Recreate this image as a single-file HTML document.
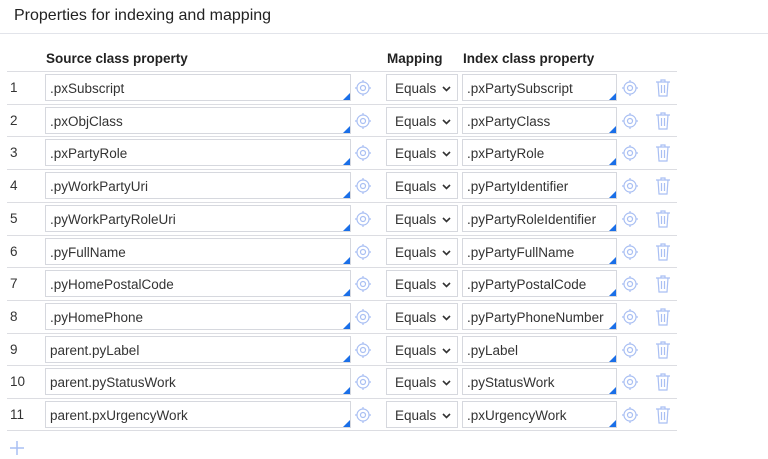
<!DOCTYPE html>
<html><head><style>
body{margin:0;width:768px;height:459px;background:#fff;font-family:"Liberation Sans",sans-serif;color:#333;position:relative;overflow:hidden}
.t{position:absolute;left:14px;top:7px;font-size:16px;color:#222}
.hr{position:absolute;left:0;right:0;top:33px;height:1px;background:#e2e4ea}
.h{position:absolute;top:51px;font-size:13.5px;font-weight:bold;color:#222}
.row{position:absolute;left:7px;width:670px;height:33px;border-top:1px solid #dcdde2}
.n{position:absolute;left:3px;top:8px;font-size:13.5px}
.in{position:absolute;top:2px;height:27px;border:1px solid #d6d8de;box-sizing:border-box;font-size:13.5px;padding:6px 0 0 4px;white-space:nowrap;overflow:hidden}
.in:after{content:"";position:absolute;right:0;bottom:0;border-left:7px solid transparent;border-bottom:7px solid #1a6fe8}
.sel{position:absolute;left:379px;top:2px;width:72px;height:27px;border:1px solid #d6d8de;box-sizing:border-box;font-size:13.5px;padding:6px 0 0 8px}
.sel svg{position:absolute;right:6px;top:11px}
.ic{position:absolute;top:7px}
</style></head><body>
<div class="t">Properties for indexing and mapping</div>
<div class="hr"></div>
<div class="h" style="left:46px">Source class property</div>
<div class="h" style="left:387px">Mapping</div>
<div class="h" style="left:463px">Index class property</div>
<div id="rows"></div>
<script>
var s=[".pxSubscript",".pxObjClass",".pxPartyRole",".pyWorkPartyUri",".pyWorkPartyRoleUri",".pyFullName",".pyHomePostalCode",".pyHomePhone","parent.pyLabel","parent.pyStatusWork","parent.pxUrgencyWork"];
var d=[".pxPartySubscript",".pxPartyClass",".pxPartyRole",".pyPartyIdentifier",".pyPartyRoleIdentifier",".pyPartyFullName",".pyPartyPostalCode",".pyPartyPhoneNumber",".pyLabel",".pyStatusWork",".pxUrgencyWork"];
var tg='<svg width="18" height="18" viewBox="0 0 18 18" fill="none" stroke="#a9bff3" stroke-width="1.2"><circle cx="9" cy="9" r="6"/><circle cx="9" cy="9" r="2.5"/><path d="M9 1v2M9 15v2M1 9h2M15 9h2"/></svg>';
var tr='<svg width="16" height="20" viewBox="0 0 16 20" fill="none" stroke="#a9bff3" stroke-width="1.2"><path d="M1 4h14M6 4V2h4v2M3 4l1 14h8l1-14M6.5 7v8M9.5 7v8"/></svg>';
var ch='<svg width="9" height="6" viewBox="0 0 9 6" fill="none" stroke="#333" stroke-width="1.6"><path d="M1 1l3.5 3.5L8 1"/></svg>';
var h='';
for(var i=0;i<11;i++){var t=71+i*32.7;
h+='<div class="row" style="top:'+t+'px"><div class="n">'+(i+1)+'</div>'+
'<div class="in" style="left:38px;width:306px">'+s[i]+'</div>'+
'<div class="ic" style="left:347px">'+tg+'</div>'+
'<div class="sel">Equals'+ch+'</div>'+
'<div class="in" style="left:455px;width:155px">'+d[i]+'</div>'+
'<div class="ic" style="left:614px">'+tg+'</div>'+
'<div class="ic" style="left:648px;top:6px">'+tr+'</div></div>';}
h+='<div class="row" style="top:430px;height:0"></div>';
document.getElementById('rows').innerHTML=h;
</script>
<svg style="position:absolute;left:9px;top:440px" width="16" height="16" viewBox="0 0 16 16" stroke="#a9bff3" stroke-width="1.5"><path d="M8 1v14M1 8h14"/></svg>
</body></html>
